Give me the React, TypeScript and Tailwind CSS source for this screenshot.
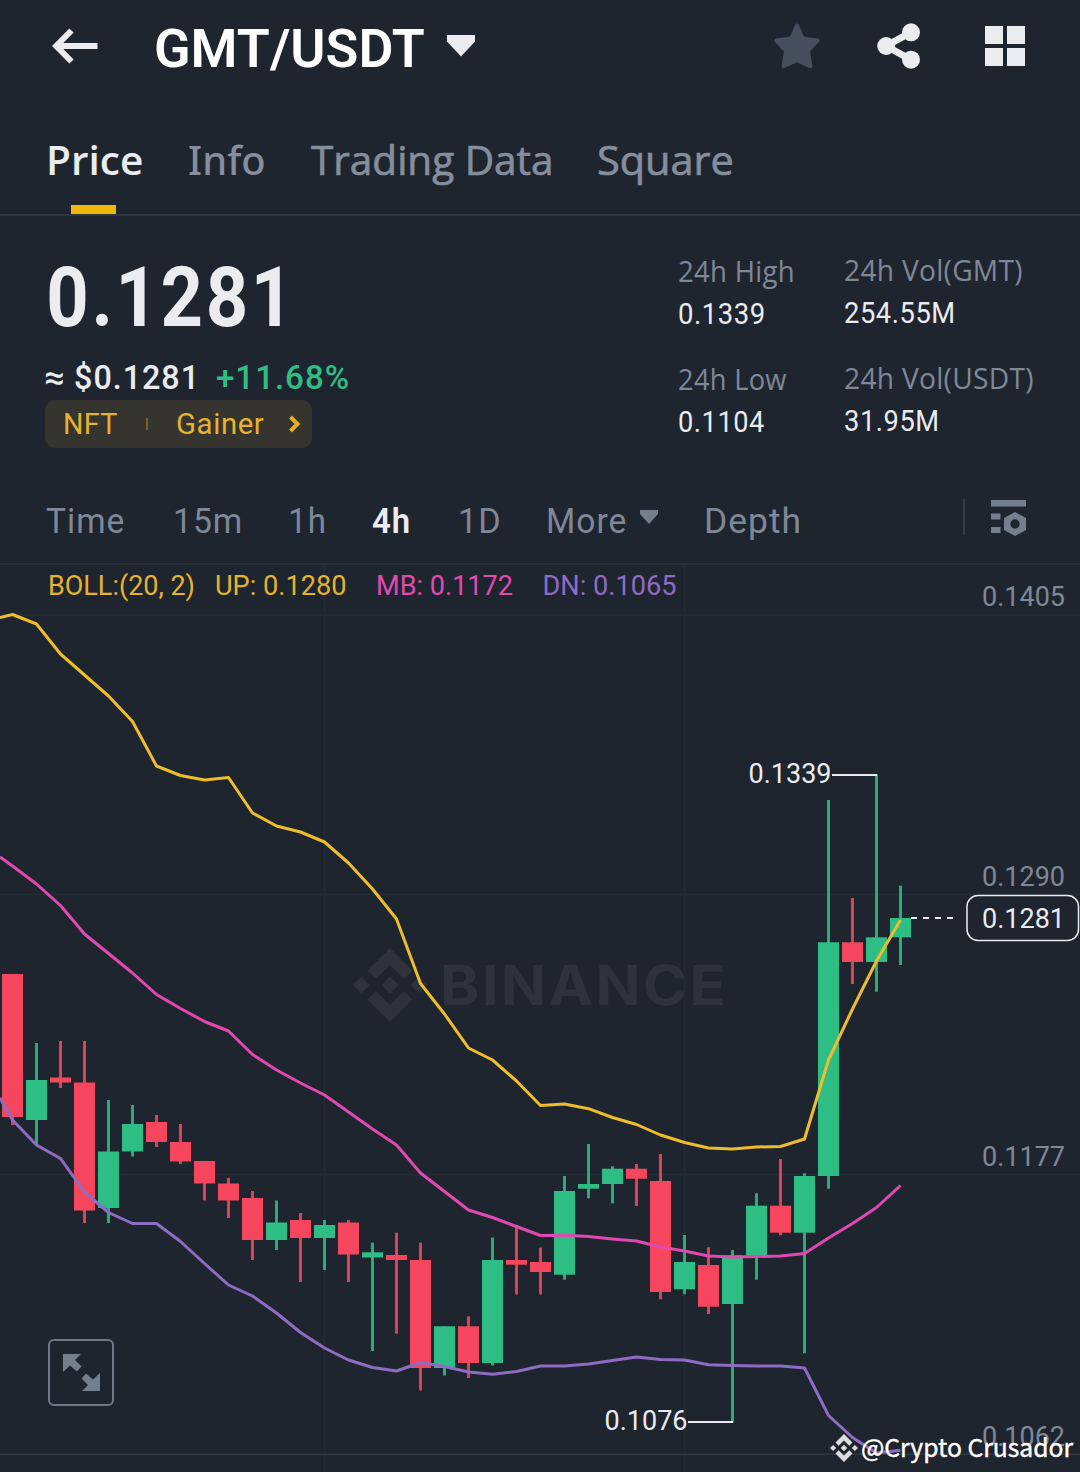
import { useLayoutEffect, useRef, useState } from 'react';

type FitProps = { text: string; w: number; className?: string };

/** Single line of text whose visible glyphs span exactly `w` pixels. */
function Fit({ text, w, className = '' }: FitProps) {
  const ref = useRef<HTMLSpanElement>(null);
  const [t, setT] = useState({ x: 0, s: 1 });
  useLayoutEffect(() => {
    const el = ref.current;
    const ctx = document.createElement('canvas').getContext('2d') as any;
    if (!el || !ctx) return;
    const cs = getComputedStyle(el);
    ctx.font = `${cs.fontWeight} ${cs.fontSize} ${cs.fontFamily}`;
    if (cs.letterSpacing !== 'normal') ctx.letterSpacing = cs.letterSpacing;
    const m = ctx.measureText(text);
    const left = -m.actualBoundingBoxLeft;
    const ink = m.actualBoundingBoxRight - left;
    const s = w / ink;
    setT({ x: -left * s, s });
  }, [text, w]);
  return (
    <span className="block shrink-0" style={{ width: w }}>
      <span
        ref={ref}
        className={`block w-max origin-left whitespace-nowrap ${className}`}
        style={{ transform: `translateX(${t.x}px) scaleX(${t.s})` }}
      >
        {text}
      </span>
    </span>
  );
}

function Header() {
  return (
    <header className="flex h-[94px] items-center pl-[52px] pr-[55px]">
      <svg className="mb-[2px] h-[36px] w-[46px] shrink-0" viewBox="0 0 46 36" fill="none" stroke="#eaecef" strokeWidth="6">
        <path d="M45.500 18H5M19.500 2.500L4.200 18L19.500 33.500" />
      </svg>
      <Fit text="GMT/USDT" w={268} className="ml-[58px] mt-[3px] font-['Roboto',sans-serif] text-[53.500px] font-semibold leading-[90px] text-white" />
      <svg className="ml-[81px] mb-[3px] h-[22px] w-[28px] shrink-0" viewBox="0 0 28 22" fill="#eaecef">
        <path d="M0 0H28V6.500L14 21.500L0 6.500Z" />
      </svg>
      <div className="ml-auto flex items-center">
        <svg className="mb-[2px] h-[46px] w-[46px]" viewBox="0 0 46 46" fill="#474f5e" stroke="#474f5e" strokeWidth="4" strokeLinejoin="round">
          <path d="M23 2.500L28.500 15.500L43.500 17.500L34 27.500L36.300 43.200L23 37L9.700 43.200L12 27.500L2.500 17.500L17.500 15.500Z" />
        </svg>
        <svg className="mb-[2px] ml-[57px] h-[46px] w-[44px]" viewBox="0 0 44 46" fill="#eaecef">
          <path d="M9 23L34 9.300M9 23L34 36.700" stroke="#eaecef" strokeWidth="7" />
          <circle cx="9.200" cy="23" r="9" />
          <circle cx="34" cy="9.300" r="9" />
          <circle cx="34" cy="36.700" r="9" />
        </svg>
        <div className="mb-[2px] ml-[64px] grid h-[40px] w-[40px] grid-cols-2 gap-[4px]">
          <i className="bg-[#eaecef]" />
          <i className="bg-[#eaecef]" />
          <i className="bg-[#eaecef]" />
          <i className="bg-[#eaecef]" />
        </div>
      </div>
    </header>
  );
}

function Tabs() {
  return (
    <nav className="relative flex h-[122px] border-b-2 border-[#2f3641] pl-[49px] pt-[36px] text-[40.500px] font-medium leading-[60px] text-[#848e9c]">
      <Fit text="Price" w={93} className="font-['Open_Sans',sans-serif] font-semibold text-[#eaecef]" />
      <span className="w-[47px]" />
      <Fit text="Info" w={75} className="font-['Noto_Sans',sans-serif]" />
      <span className="w-[47px]" />
      <Fit text="Trading Data" w={240} className="font-['Open_Sans',sans-serif] [-webkit-text-stroke:0.7px_#848e9c]" />
      <span className="w-[48px]" />
      <Fit text="Square" w={133} className="font-['Open_Sans',sans-serif] [-webkit-text-stroke:0.7px_#848e9c]" />
      <span className="absolute bottom-0 left-[71px] h-[9px] w-[45px] bg-[#f0b90b]" />
    </nav>
  );
}

function Stat({ label, lw, value, vw }: { label: string; lw: number; value: string; vw: number }) {
  return (
    <div>
      <Fit text={label} w={lw} className="font-['Open_Sans',sans-serif] text-[29px] leading-[40px] tracking-[0.01em] text-[#7f8897]" />
      <Fit text={value} w={vw} className="font-['Roboto',sans-serif] text-[29px] leading-[46px] tracking-[0.02em] text-[#eaecef]" />
    </div>
  );
}

function Summary() {
  return (
    <section className="flex h-[263px] font-['Roboto',sans-serif]">
      <div className="w-[679px] pl-[45px] pt-[41px]">
        <div className="pl-[4px]">
          <Fit text="0.1281" w={231} className="text-[83.500px] font-bold leading-[82px] tracking-[0.035em] text-[#eaecef]" />
        </div>
        <div className="mt-[17px] flex h-[44px] text-[34px] font-medium leading-[43px]">
          <Fit text="≈" w={18} className="text-[#eaecef]" />
          <span className="w-[12px]" />
          <Fit text="$0.1281" w={118} className="tracking-[0.03em] text-[#eaecef]" />
          <span className="w-[24px]" />
          <Fit text="+11.68%" w={131} className="tracking-[0.03em] text-[#2ebd85]" />
        </div>
        <div className="flex h-[48px] w-[267px] items-center rounded-[10px] bg-[#36342e] pl-[20px] text-[29px] text-[#e6b32e]">
          <Fit text="NFT" w={52} className="leading-[50px] tracking-[0.01em]" />
          <span className="ml-[29px] h-[12px] w-[2px] bg-[#7a6124]" />
          <span className="w-[29px]" />
          <Fit text="Gainer" w={87} className="leading-[50px] tracking-[0.02em]" />
          <svg className="ml-[25px] h-[18px] w-[12px]" viewBox="0 0 12 18" fill="none" stroke="#e6ae22" strokeWidth="4">
            <path d="M1.500 2L8.500 9L1.500 16" />
          </svg>
        </div>
      </div>
      <div className="flex w-[166px] flex-col gap-[22px] pt-[35px]">
        <Stat label="24h High" lw={114} value="0.1339" vw={85} />
        <Stat label="24h Low" lw={108} value="0.1104" vw={85} />
      </div>
      <div className="flex flex-col gap-[22px] pt-[34px]">
        <Stat label="24h Vol(GMT)" lw={177} value="254.55M" vw={108} />
        <Stat label="24h Vol(USDT)" lw={188} value="31.95M" vw={92} />
      </div>
    </section>
  );
}

function Intervals() {
  return (
    <div className="flex h-[86px] items-center border-b-2 border-[#2a303a] pl-[46px] font-['Roboto',sans-serif] text-[34.500px] leading-[84px] tracking-[0.03em] text-[#7f8897]">
      <Fit text="Time" w={78} />
      <span className="w-[51px]" />
      <Fit text="15m" w={65} />
      <span className="w-[50px]" />
      <Fit text="1h" w={34} />
      <span className="w-[48px]" />
      <Fit text="4h" w={37} className="font-semibold text-[#eaecef]" />
      <span className="w-[51px]" />
      <Fit text="1D" w={39} />
      <span className="w-[49px]" />
      <Fit text="More" w={78} />
      <svg className="mb-[8px] ml-[14px] h-[14px] w-[18px]" viewBox="0 0 18 14" fill="#757e8d">
        <path d="M0 0H18V4L9 14L0 4Z" />
      </svg>
      <span className="w-[48px]" />
      <Fit text="Depth" w={93} />
      <span className="mb-[8px] ml-[164px] h-[36px] w-[2px] bg-[#343b46]" />
      <svg className="mb-[6px] ml-[26px] h-[36px] w-[36px]" viewBox="0 0 36 36" fill="#757e8d">
        <path d="M0 0H35V6.500H0ZM0 13.500H9.500V19.500H0ZM0 27H9.500V33H0Z" />
        <path fillRule="evenodd" d="M24 12L35 18V30L24 36L13 30V18ZM24 19.300A4.700 4.700 0 1 0 24 28.700A4.700 4.700 0 1 0 24 19.300Z" />
      </svg>
    </div>
  );
}

/** [direction, body top, body bottom, wick top, wick bottom] */
const candles: [number, number, number, number, number][] = [
  [0, 974, 1117, 974, 1125],
  [1, 1080, 1120, 1043, 1144.5],
  [0, 1077.5, 1082.5, 1041, 1088],
  [0, 1082.5, 1210.5, 1041, 1223],
  [1, 1151.5, 1208, 1100, 1223],
  [1, 1124, 1151.5, 1105, 1156.5],
  [0, 1122, 1142, 1115, 1147],
  [0, 1142, 1161.5, 1124, 1164],
  [0, 1161, 1183.5, 1161, 1200.5],
  [0, 1183.5, 1200.5, 1178, 1218],
  [0, 1198, 1240, 1191, 1260],
  [1, 1222.5, 1240, 1200.5, 1250],
  [0, 1220, 1238, 1213, 1282],
  [1, 1225, 1238, 1220, 1270],
  [0, 1222.5, 1254.5, 1220, 1282],
  [1, 1252.3, 1257.5, 1242.7, 1351],
  [0, 1255, 1260, 1232.7, 1333.7],
  [0, 1260, 1368, 1242.7, 1390.5],
  [1, 1326.3, 1368, 1326.3, 1375.5],
  [0, 1326.3, 1363, 1316.3, 1378],
  [1, 1260, 1363, 1237.5, 1365.5],
  [0, 1260, 1264.7, 1226.7, 1294.5],
  [0, 1262, 1272, 1247.5, 1294.5],
  [1, 1191, 1274.7, 1176, 1279.7],
  [1, 1184, 1188.7, 1144, 1198.3],
  [1, 1168.7, 1184, 1166.3, 1203.3],
  [0, 1168.7, 1178.7, 1164, 1206],
  [0, 1181, 1292, 1154, 1299.3],
  [1, 1262, 1289.3, 1235, 1294.3],
  [0, 1265, 1306.7, 1247.3, 1314],
  [1, 1255.3, 1304, 1250, 1422.5],
  [1, 1205.7, 1255.3, 1193.3, 1279.7],
  [0, 1205.7, 1232.7, 1159, 1235.3],
  [1, 1176, 1232.7, 1173.3, 1353.3],
  [1, 942.3, 1176, 800, 1188.7],
  [0, 942.3, 962, 898, 984],
  [1, 937.3, 962, 774.5, 991.7],
  [1, 918, 937.3, 885.7, 965],
];

const upper = [614.5, 624, 654, 675, 696, 721.5, 766, 775.5, 780, 777.5, 813, 826, 832, 842, 863, 889, 919, 983.5, 1014, 1048, 1060, 1081, 1105.5, 1104, 1108.7, 1117.5, 1124.5, 1135, 1142.5, 1148, 1149, 1147, 1146.5, 1139, 1060, 1009, 961, 920];
const middle = [866, 884, 905.5, 934, 953.5, 973, 994.5, 1008.5, 1021.5, 1031, 1054.5, 1070, 1083, 1095, 1112, 1129, 1145, 1173, 1191.5, 1210, 1217.5, 1226.5, 1235.5, 1235.3, 1236.5, 1239, 1241, 1247, 1251, 1256, 1257, 1256.5, 1256, 1253.5, 1238, 1223.5, 1207.5, 1185.5];
const lower = [1120, 1145, 1158.5, 1192, 1212.5, 1223.5, 1223.5, 1241.5, 1263.5, 1285, 1296, 1313, 1332.5, 1348, 1360, 1367.5, 1371, 1362.5, 1366.5, 1372, 1374.3, 1371.5, 1366, 1366, 1364, 1360.5, 1357, 1359.5, 1360, 1364.7, 1365.5, 1366, 1366, 1368, 1415.5, 1437.5, 1453, 1450.3];

const line = (start: number, ys: number[]) => `0,${start} ` + ys.map((y, i) => `${12.5 + i * 24},${y}`).join(' ');

function Diamond({ fill }: { fill: string }) {
  return (
    <path
      fill={fill}
      d="M37 0L59.500 22.500L51 31L37 17L23 31L14.500 22.500ZM8.200 28.800L16.400 37L8.200 45.200L0 37ZM37 28.300L45.700 37L37 45.700L28.300 37ZM65.800 28.800L74 37L65.800 45.200L57.600 37ZM23 43L37 57L51 43L59.500 51.500L37 74L14.500 51.500Z"
    />
  );
}

function Label({ x, y, w, fill, children }: { x: number; y: number; w: number; fill: string; children: string }) {
  return (
    <text x={x} y={y} textLength={w} lengthAdjust="spacingAndGlyphs" fill={fill} className="font-['Roboto',sans-serif] text-[28px]">
      {children}
    </text>
  );
}

function Chart() {
  return (
    <section className="relative h-[907px]">
      <svg className="block h-[907px] w-[1080px]" viewBox="0 565 1080 907">
        <g fill="#242b35">
          <rect x="0" y="614" width="1080" height="2" />
          <rect x="0" y="893.500" width="1080" height="2" />
          <rect x="0" y="1173.500" width="1080" height="2" />
          <rect x="323.500" y="565" width="2" height="907" />
          <rect x="683.500" y="565" width="2" height="907" />
        </g>
        <rect x="0" y="1453.500" width="1080" height="1.500" fill="#323843" />
        <g transform="translate(353 948)">
          <Diamond fill="#2d323c" />
        </g>
        <text x="440" y="1005" textLength="288" lengthAdjust="spacingAndGlyphs" fill="#2d323c" className="font-['Inter',sans-serif] text-[55.500px] font-bold tracking-[0.04em]">
          BINANCE
        </text>
        {candles.map(([up, top, bottom, high, low], i) => (
          <g key={i} fill={up ? '#2ebd85' : '#f6465d'}>
            <rect x={11 + i * 24} y={high} width="3" height={low - high} opacity="0.88" />
            <rect x={2 + i * 24} y={top} width="21" height={bottom - top} />
          </g>
        ))}
        <g fill="none" strokeWidth="3" strokeLinejoin="round">
          <polyline points={line(1098, lower)} stroke="#8f6cc4" />
          <polyline points={line(857, middle)} stroke="#e049b0" />
          <polyline points={line(617.5, upper)} stroke="#edbd2c" />
        </g>
        <Label x={48} y={595} w={147} fill="#e6b32e">BOLL:(20, 2)</Label>
        <Label x={215} y={595} w={131.500} fill="#e6b32e">UP: 0.1280</Label>
        <Label x={376} y={595} w={137} fill="#e04bb0">MB: 0.1172</Label>
        <Label x={542.5} y={595} w={134} fill="#8f6cc4">DN: 0.1065</Label>
        <Label x={982} y={606} w={83} fill="#7f8897">0.1405</Label>
        <Label x={982} y={886} w={83} fill="#7f8897">0.1290</Label>
        <Label x={982} y={1166} w={83} fill="#7f8897">0.1177</Label>
        <Label x={982} y={1446} w={83} fill="#7f8897">0.1062</Label>
        <rect x="967" y="895.500" width="111.500" height="45" rx="11" fill="#1f252f" stroke="#eaecef" strokeWidth="1.500" />
        <Label x={982} y={928} w={83} fill="#eaecef">0.1281</Label>
        <path d="M911 918H955" stroke="#eaecef" strokeWidth="1.800" strokeDasharray="6 6" />
        <Label x={748.500} y={783} w={83} fill="#eaecef">0.1339</Label>
        <path d="M832 775H877M688 1422H733" stroke="#eaecef" strokeWidth="1.800" />
        <Label x={604.500} y={1430} w={83} fill="#eaecef">0.1076</Label>
        <g transform="translate(830 1434) scale(0.378)">
          <Diamond fill="#dcdcdc" />
        </g>
        <text x="861" y="1456.500" textLength="212" lengthAdjust="spacingAndGlyphs" fill="#ffffff" className="font-['Noto_Sans_CJK_SC',sans-serif] text-[24.500px] font-normal [paint-order:stroke] [stroke-width:0.4px] [stroke:#ffffff]">
          @Crypto Crusador
        </text>
      </svg>
      <button className="absolute left-[48px] top-[774px] flex h-[67px] w-[66px] items-center justify-center rounded-[6px] border-2 border-[#6f7887]">
        <svg className="h-[37px] w-[37px]" viewBox="0 0 37 37" fill="#757e8d">
          <path d="M0 0H18L12 6L18.500 12.500L14 17.500L7 11.500L0 18ZM37 37H19L25 31L18.500 24.500L23 19.500L30 25.500L37 19Z" />
        </svg>
      </button>
    </section>
  );
}

export default function App() {
  return (
    <main className="h-[1472px] w-[1080px] overflow-hidden bg-[#1f252f]">
      <Header />
      <Tabs />
      <Summary />
      <Intervals />
      <Chart />
    </main>
  );
}
